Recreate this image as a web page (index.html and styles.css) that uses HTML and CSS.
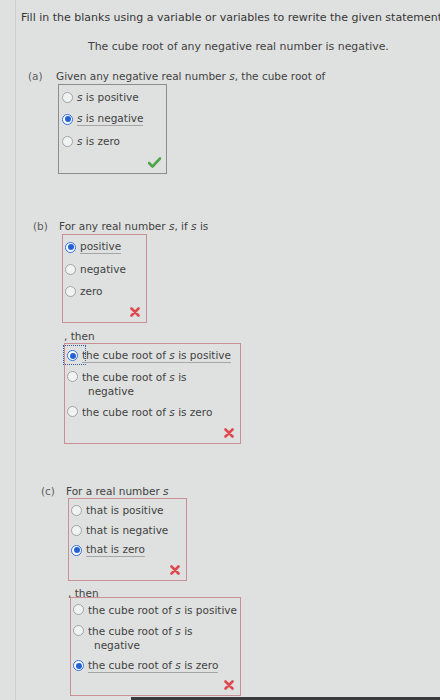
FILE: index.html
```html
<!DOCTYPE html>
<html>
<head>
<meta charset="utf-8">
<link rel="stylesheet" href="styles.css">
</head>
<body>
<div class="page">
  <div class="title">Fill in the blanks using a variable or variables to rewrite the given statement.</div>
  <div class="statement">The cube root of any negative real number is negative.</div>

  <div class="part part-a">
    <div class="plabel">(a)</div>
    <div class="pbody">
      <div class="q">Given any negative real number <i>s</i>, the cube root of</div>
      <div class="box box-a">
        <div class="opt"><span class="radio"></span><span class="txt"><i>s</i> is positive</span></div>
        <div class="opt"><span class="radio on"></span><span class="txt sel"><i>s</i> is negative</span></div>
        <div class="opt"><span class="radio"></span><span class="txt"><i>s</i> is zero</span></div>
        <div class="mark">
          <svg width="13" height="11" viewBox="0 0 13 11"><path d="M1 6 L4.5 9.5 L12 1.5" fill="none" stroke="#4fa64a" stroke-width="2.6" stroke-linecap="round" stroke-linejoin="round"/></svg>
        </div>
      </div>
    </div>
  </div>

  <div class="part part-b">
    <div class="plabel">(b)</div>
    <div class="pbody">
      <div class="q">For any real number <i>s</i>, if <i>s</i> is</div>
      <div class="box wrong box-b1">
        <div class="opt"><span class="radio on"></span><span class="txt sel">positive</span></div>
        <div class="opt"><span class="radio"></span><span class="txt">negative</span></div>
        <div class="opt"><span class="radio"></span><span class="txt">zero</span></div>
        <div class="mark">
          <svg width="10" height="10" viewBox="0 0 10 10"><path d="M1.5 1.5 L8.5 8.5 M8.5 1.5 L1.5 8.5" stroke="#e04850" stroke-width="2.6" stroke-linecap="round"/></svg>
        </div>
      </div>
      <div class="then then-b">, then</div>
      <div class="box wrong box-b2">
        <div class="opt"><span class="focus"><span class="radio on"></span></span><span class="txt sel">the cube root of <i>s</i> is positive</span></div>
        <div class="opt"><span class="radio"></span><span class="txt">the cube root of <i>s</i> is<br><span class="cont">negative</span></span></div>
        <div class="opt"><span class="radio"></span><span class="txt">the cube root of <i>s</i> is zero</span></div>
        <div class="mark">
          <svg width="10" height="10" viewBox="0 0 10 10"><path d="M1.5 1.5 L8.5 8.5 M8.5 1.5 L1.5 8.5" stroke="#e04850" stroke-width="2.6" stroke-linecap="round"/></svg>
        </div>
      </div>
    </div>
  </div>

  <div class="part part-c">
    <div class="plabel">(c)</div>
    <div class="pbody">
      <div class="q">For a real number <i>s</i></div>
      <div class="box wrong box-c1">
        <div class="opt"><span class="radio"></span><span class="txt">that is positive</span></div>
        <div class="opt"><span class="radio"></span><span class="txt">that is negative</span></div>
        <div class="opt"><span class="radio on"></span><span class="txt sel">that is zero</span></div>
        <div class="mark">
          <svg width="10" height="10" viewBox="0 0 10 10"><path d="M1.5 1.5 L8.5 8.5 M8.5 1.5 L1.5 8.5" stroke="#e04850" stroke-width="2.6" stroke-linecap="round"/></svg>
        </div>
      </div>
      <div class="then then-c">, then</div>
      <div class="box wrong box-c2">
        <div class="opt"><span class="radio"></span><span class="txt">the cube root of <i>s</i> is positive</span></div>
        <div class="opt"><span class="radio"></span><span class="txt">the cube root of <i>s</i> is<br><span class="cont">negative</span></span></div>
        <div class="opt"><span class="radio on"></span><span class="txt sel">the cube root of <i>s</i> is zero</span></div>
        <div class="mark">
          <svg width="10" height="10" viewBox="0 0 10 10"><path d="M1.5 1.5 L8.5 8.5 M8.5 1.5 L1.5 8.5" stroke="#e04850" stroke-width="2.6" stroke-linecap="round"/></svg>
        </div>
      </div>
    </div>
  </div>
  <div class="bottom-band"></div>
</div>
</body>
</html>
```

FILE: styles.css
```css
html, body {
  margin: 0;
  padding: 0;
  background: #dfe1e0;
  overflow: hidden;
}
.page {
  position: relative;
  height: 700px;
  font-family: "DejaVu Sans", Verdana, sans-serif;
  font-size: 10.5px;
  line-height: 14px;
  color: #414141;
  padding-top: 11px;
  box-sizing: border-box;
  border-left: 1px solid #cfd1d0;
  margin-left: 15px;
  width: 425px;
}
.title {
  margin-left: 5px;
  white-space: nowrap;
  overflow: hidden;
  color: #353535;
  font-size: 11px;
}
.statement {
  margin-top: 15px;
  margin-left: 72px;
  white-space: nowrap;
  font-size: 10.9px;
}
.part {
  display: flex;
}
.plabel {
  color: #5d5d5d;
}
.pbody {
  display: flex;
  flex-direction: column;
  align-items: flex-start;
}
.q {
  white-space: nowrap;
}
.part-a { margin-top: 15px; margin-left: 12px; }
.part-a .plabel { width: 28px; }
.part-b { margin-top: 45px; margin-left: 17px; }
.part-b .plabel { width: 26px; }
.part-c { margin-top: 40px; margin-left: 25px; }
.part-c .plabel { width: 25px; }

.box {
  border: 1px solid #8c8c8c;
  box-sizing: border-box;
  padding: 1px 4px 0 2px;
  display: flex;
  flex-direction: column;
}
.box.wrong {
  border-color: #c98f94;
}
.opt {
  display: flex;
  align-items: flex-start;
  white-space: nowrap;
  padding: 4px 0;
}
.radio {
  width: 11px;
  height: 11px;
  box-sizing: border-box;
  border-radius: 50%;
  border: 1px solid #a2a4a3;
  background: #f1f2f2;
  margin-top: 1.5px;
  margin-right: 4px;
  flex: none;
  position: relative;
}
.radio.on {
  border: 1px solid #2f6fd8;
  background: #ffffff;
}
.radio.on::after {
  content: "";
  position: absolute;
  left: 1.5px;
  top: 1.5px;
  width: 6px;
  height: 6px;
  border-radius: 50%;
  background: #2462d2;
}
.focus {
  display: flex;
  outline: 1px dotted #3a5aa8;
  outline-offset: 3px;
}
.txt.sel {
  border-bottom: 1px solid #a5a7a6;
  line-height: 13px;
}
.cont {
  padding-left: 6px;
}
.mark {
  display: flex;
  justify-content: flex-end;
  align-items: center;
  flex: 1;
}

.box-a { margin-left: 2px; width: 109px; height: 90px; margin-top: 1px; padding-right: 5px; }
.box-a .opt { padding: 4px 0; }
.box-a .radio { margin-left: 1px; }

.box-b1 { margin-left: 3px; width: 85px; height: 89px; margin-top: 1px; padding-right: 6px; }
.box-b1 .opt { padding: 4px 0; }

.then { white-space: nowrap; }
.then-b { margin-left: 5px; margin-top: 6px; }
.box-b2 { margin-left: 5px; width: 177px; height: 101px; padding-right: 6px; }
.box-b2 .opt { padding: 3.5px 0; }

.box-c1 { margin-left: 2px; width: 119px; height: 83px; padding-right: 6px; }
.box-c1 .opt { padding: 3px 0; }

.then-c { margin-left: 2px; margin-top: 6px; line-height: 12px; }
.box-c2 { margin-left: 4px; width: 171px; height: 99px; margin-top: -2px; padding-right: 6px; padding-bottom: 2px; }
.box-c2 .opt { padding: 3.5px 0; }

.bottom-band {
  position: absolute;
  left: 115px;
  right: 0;
  bottom: 0;
  height: 3px;
  background: #3a3b3c;
}
```
